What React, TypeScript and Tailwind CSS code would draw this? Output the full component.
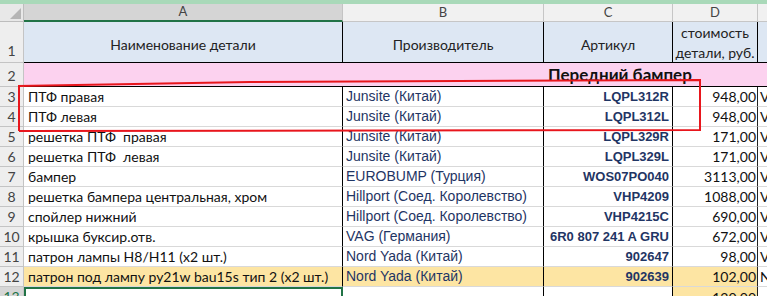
const calibri = "font-['Lato','Open_Sans',sans-serif]";
const arial = "font-['Liberation_Sans',Arial,sans-serif]";

type Row = {
  n: number;
  a: string;
  b: string;
  c: string;
  d: string;
  e: string;
  hl?: boolean;
};

const rows: Row[] = [
  { n: 3, a: "ПТФ правая", b: "Junsite (Китай)", c: "LQPL312R", d: "948,00", e: "V" },
  { n: 4, a: "ПТФ левая", b: "Junsite (Китай)", c: "LQPL312L", d: "948,00", e: "V" },
  { n: 5, a: "решетка ПТФ  правая", b: "Junsite (Китай)", c: "LQPL329R", d: "171,00", e: "V" },
  { n: 6, a: "решетка ПТФ  левая", b: "Junsite (Китай)", c: "LQPL329L", d: "171,00", e: "V" },
  { n: 7, a: "бампер", b: "EUROBUMP (Турция)", c: "WOS07PO040", d: "3113,00", e: "V" },
  { n: 8, a: "решетка бампера центральная, хром", b: "Hillport (Соед. Королевство)", c: "VHP4209", d: "1088,00", e: "V" },
  { n: 9, a: "спойлер нижний", b: "Hillport (Соед. Королевство)", c: "VHP4215C", d: "690,00", e: "V" },
  { n: 10, a: "крышка буксир.отв.", b: "VAG (Германия)", c: "6R0 807 241 A GRU", d: "672,00", e: "V" },
  { n: 11, a: "патрон лампы H8/H11 (x2 шт.)", b: "Nord Yada (Китай)", c: "902647", d: "98,00", e: "V" },
  { n: 12, a: "патрон под лампу py21w bau15s тип 2 (x2 шт.)", b: "Nord Yada (Китай)", c: "902639", d: "102,00", e: "N", hl: true },
];

function RowHead({ n, selected }: { n: number | string; selected?: boolean }) {
  return (
    <div
      className={`w-[24px] shrink-0 flex items-center justify-center border-r border-b border-[#c4c4c4] text-[14px] ${calibri} ${
        selected ? "bg-[#d6d6d6] text-[#217346]" : "bg-[#eeeeee] text-[#444]"
      }`}
    >
      {n}
    </div>
  );
}

export default function App() {
  return (
    <div className="relative w-[767px] h-[296px] overflow-hidden bg-white">
      <div className="h-[4px] bg-[#a9d9b9]" />

      {/* column letters */}
      <div className={`flex h-[18px] text-[13px] text-[#444] ${calibri}`}>
        <div className="w-[24px] shrink-0 bg-[#e8e8e8] border-r border-b border-[#bdbdbd] flex items-end justify-end p-[2px]">
          <div className="w-0 h-0 border-l-[11px] border-l-transparent border-b-[11px] border-b-[#b5b5b5]" />
        </div>
        <div className="w-[319px] shrink-0 bg-[#d5d5d5] border-r border-[#c4c4c4] border-b-2 border-b-[#217346] flex items-center justify-center">
          A
        </div>
        <div className="w-[201px] shrink-0 bg-[#f1f1f1] border-r border-b border-[#c6c6c6] flex items-center justify-center">B</div>
        <div className="w-[129px] shrink-0 bg-[#f1f1f1] border-r border-b border-[#c6c6c6] flex items-center justify-center">C</div>
        <div className="w-[85px] shrink-0 bg-[#f1f1f1] border-r border-b border-[#c6c6c6] flex items-center justify-center">D</div>
        <div className="flex-1 bg-[#f1f1f1] border-b border-[#c6c6c6]" />
      </div>

      {/* row 1: titles */}
      <div className={`flex h-[41px] text-[14px] text-[#222] ${calibri}`}>
        <div className="w-[24px] shrink-0 flex items-end justify-center pb-[1px] bg-[#eeeeee] border-r border-b border-[#c4c4c4] text-[#444]">1</div>
        <div className="w-[319px] shrink-0 bg-[#dde7f3] border-r border-b border-black flex items-center justify-center pt-1">
          Наименование детали
        </div>
        <div className="w-[201px] shrink-0 bg-[#dde7f3] border-r border-b border-black flex items-center justify-center pt-1">
          Производитель
        </div>
        <div className="w-[129px] shrink-0 bg-[#dde7f3] border-r border-b border-black flex items-center justify-center pt-1">
          Артикул
        </div>
        <div className="w-[85px] shrink-0 bg-[#dde7f3] border-r border-b border-black flex flex-col items-center justify-center leading-[20px] pt-[2px]">
          <span>стоимость</span>
          <span>детали, руб.</span>
        </div>
        <div className="flex-1 bg-[#dde7f3] border-b border-black" />
      </div>

      {/* row 2: section */}
      <div className={`flex h-[24px] ${calibri}`}>
        <div className="w-[24px] shrink-0 flex items-end justify-center bg-[#eeeeee] border-r border-b border-[#c4c4c4] text-[14px] text-[#444]">2</div>
        <div className="flex-1 bg-[#fcd2ef] border-b border-black flex items-center pl-[524px] text-[17px] font-bold text-[#111] whitespace-nowrap">
          Передний бампер
        </div>
      </div>

      {rows.map((r) => {
        const bg = r.hl ? "bg-[#fde5a3]" : "bg-white";
        return (
          <div key={r.n} className="flex h-[20px]">
            <RowHead n={r.n} />
            <div className={`w-[319px] shrink-0 ${bg} border-r border-r-black border-b border-b-[#d9d9d9] flex items-center pl-[4px] text-[14px] text-[#111] whitespace-pre overflow-hidden ${calibri}`}>
              {r.a}
            </div>
            <div className={`w-[201px] shrink-0 ${bg} border-r border-r-black border-b border-b-[#d9d9d9] flex items-center pl-[3px] text-[14px] text-[#1f3564] whitespace-nowrap overflow-hidden ${arial}`}>
              {r.b}
            </div>
            <div className={`w-[129px] shrink-0 ${bg} border-r border-r-black border-b border-b-[#d9d9d9] flex items-center justify-end pr-[3px] text-[13px] font-bold text-[#1f3564] whitespace-nowrap overflow-hidden ${arial}`}>
              {r.c}
            </div>
            <div className={`w-[85px] shrink-0 ${bg} border-r border-r-[#222] border-b border-b-[#d9d9d9] flex items-center justify-end pr-[1px] text-[14px] text-[#111] ${calibri}`}>
              {r.d}
            </div>
            <div className={`flex-1 bg-white border-b border-b-[#d9d9d9] flex items-center pl-[2px] text-[14px] text-[#111] overflow-hidden ${calibri}`}>
              {r.e}
            </div>
          </div>
        );
      })}

      {/* row 13: selected cell */}
      <div className="flex h-[20px]">
        <RowHead n={13} selected />
        <div className="w-[319px] shrink-0 bg-white border-2 border-[#217346]" />
        <div className="w-[201px] shrink-0 bg-white border-r border-r-black" />
        <div className="w-[129px] shrink-0 bg-white border-r border-r-black" />
        <div className={`w-[85px] shrink-0 bg-[#fde5a3] border-r border-r-[#222] flex items-center justify-end pr-[1px] text-[14px] text-[#111] ${calibri}`}>
          120,00
        </div>
        <div className="flex-1 bg-white" />
      </div>

      {/* hand-drawn highlight */}
      <svg className="absolute inset-0 pointer-events-none" width="767" height="296">
        <path d="M19 131 L19 86 L250 82 L700 80 L700 130 L19 131" fill="none" stroke="#e8161d" strokeWidth="2" />
      </svg>
    </div>
  );
}
